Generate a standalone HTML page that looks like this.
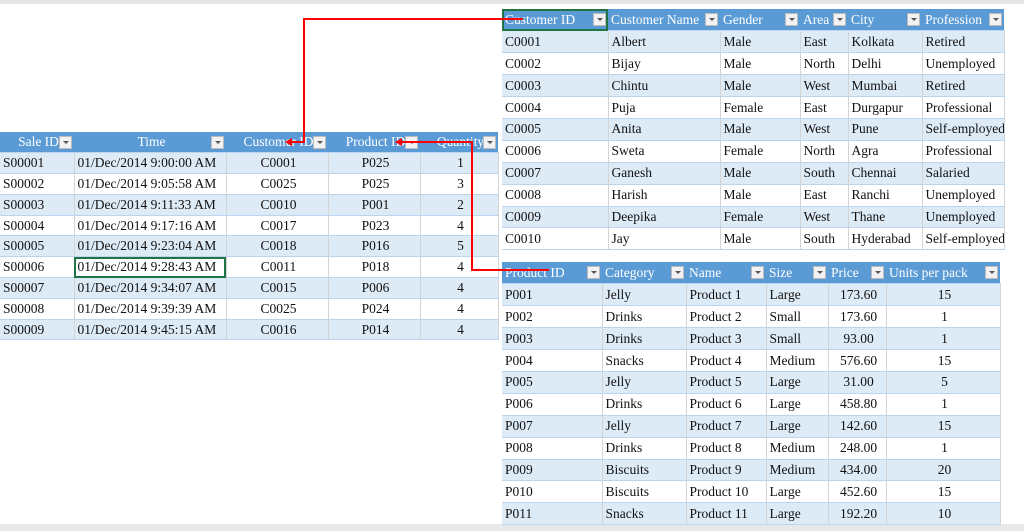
<!DOCTYPE html><html><head><style>
body{margin:0;width:1024px;height:531px;background:#fff;position:relative;overflow:hidden;font-family:"Liberation Serif",serif;font-size:13.5px;color:#111}
.t{position:absolute;border-collapse:collapse;table-layout:fixed}
.t td{padding:0 0 0 3px;white-space:nowrap;overflow:hidden;border-right:1px solid #d4d4d4;line-height:18px;box-sizing:border-box}
.t tr:nth-child(even) td{background:#ddebf7;border-bottom:1px solid #bcd5ee}
.t tr:nth-child(odd) td{background:#fff;border-bottom:1px solid #bcd5ee}
.t tr.h td{background:#5b9bd5;color:#fff;position:relative;border-right:none}
.a td{height:20.8px}
.b td{height:21.9px}
.dd{position:absolute;right:2px;top:4px;width:13px;height:13px;background:#f2f2f2;border:1px solid #bbb;box-sizing:border-box}
.dd:after{content:"";position:absolute;left:3px;top:4px;border-left:3px solid transparent;border-right:3px solid transparent;border-top:3px solid #555}
.c{text-align:center}
.r{position:absolute;background:#f00}
</style></head><body>
<div style="position:absolute;left:0;top:0;width:1024px;height:4px;background:#e6e6e6"></div>
<div style="position:absolute;left:0;top:524px;width:1024px;height:7px;background:#e8e8e8"></div>

<table class="t a" style="left:0;top:132px;width:498px">
<colgroup><col style="width:74px"><col style="width:152px"><col style="width:102px"><col style="width:92px"><col style="width:78px"></colgroup>
<tr class="h"><td class="c">Sale ID<span class="dd"></span></td><td class="c">Time<span class="dd"></span></td><td class="c">Customer ID<span class="dd"></span></td><td class="c">Product ID<span class="dd"></span></td><td class="c">Quantity<span class="dd"></span></td></tr>
<tr><td>S00001</td><td>01/Dec/2014 9:00:00 AM</td><td class="c">C0001</td><td class="c">P025</td><td class="c">1</td></tr>
<tr><td>S00002</td><td>01/Dec/2014 9:05:58 AM</td><td class="c">C0025</td><td class="c">P025</td><td class="c">3</td></tr>
<tr><td>S00003</td><td>01/Dec/2014 9:11:33 AM</td><td class="c">C0010</td><td class="c">P001</td><td class="c">2</td></tr>
<tr><td>S00004</td><td>01/Dec/2014 9:17:16 AM</td><td class="c">C0017</td><td class="c">P023</td><td class="c">4</td></tr>
<tr><td>S00005</td><td>01/Dec/2014 9:23:04 AM</td><td class="c">C0018</td><td class="c">P016</td><td class="c">5</td></tr>
<tr><td>S00006</td><td style="outline:2px solid #217346;outline-offset:-2px">01/Dec/2014 9:28:43 AM</td><td class="c">C0011</td><td class="c">P018</td><td class="c">4</td></tr>
<tr><td>S00007</td><td>01/Dec/2014 9:34:07 AM</td><td class="c">C0015</td><td class="c">P006</td><td class="c">4</td></tr>
<tr><td>S00008</td><td>01/Dec/2014 9:39:39 AM</td><td class="c">C0025</td><td class="c">P024</td><td class="c">4</td></tr>
<tr><td>S00009</td><td>01/Dec/2014 9:45:15 AM</td><td class="c">C0016</td><td class="c">P014</td><td class="c">4</td></tr>
</table>

<table class="t b" style="left:502px;top:9px;width:502px">
<colgroup><col style="width:106px"><col style="width:112px"><col style="width:80px"><col style="width:48px"><col style="width:74px"><col style="width:82px"></colgroup>
<tr class="h"><td style="outline:2px solid #217346;outline-offset:-2px">Customer ID<span class="dd"></span></td><td>Customer Name<span class="dd"></span></td><td>Gender<span class="dd"></span></td><td>Area<span class="dd"></span></td><td>City<span class="dd"></span></td><td>Profession<span class="dd"></span></td></tr>
<tr><td>C0001</td><td>Albert</td><td>Male</td><td>East</td><td>Kolkata</td><td>Retired</td></tr>
<tr><td>C0002</td><td>Bijay</td><td>Male</td><td>North</td><td>Delhi</td><td>Unemployed</td></tr>
<tr><td>C0003</td><td>Chintu</td><td>Male</td><td>West</td><td>Mumbai</td><td>Retired</td></tr>
<tr><td>C0004</td><td>Puja</td><td>Female</td><td>East</td><td>Durgapur</td><td>Professional</td></tr>
<tr><td>C0005</td><td>Anita</td><td>Male</td><td>West</td><td>Pune</td><td>Self-employed</td></tr>
<tr><td>C0006</td><td>Sweta</td><td>Female</td><td>North</td><td>Agra</td><td>Professional</td></tr>
<tr><td>C0007</td><td>Ganesh</td><td>Male</td><td>South</td><td>Chennai</td><td>Salaried</td></tr>
<tr><td>C0008</td><td>Harish</td><td>Male</td><td>East</td><td>Ranchi</td><td>Unemployed</td></tr>
<tr><td>C0009</td><td>Deepika</td><td>Female</td><td>West</td><td>Thane</td><td>Unemployed</td></tr>
<tr><td>C0010</td><td>Jay</td><td>Male</td><td>South</td><td>Hyderabad</td><td>Self-employed</td></tr>
</table>

<table class="t b" style="left:502px;top:262px;width:498px">
<colgroup><col style="width:100px"><col style="width:84px"><col style="width:80px"><col style="width:62px"><col style="width:58px"><col style="width:114px"></colgroup>
<tr class="h"><td>Product ID<span class="dd"></span></td><td>Category<span class="dd"></span></td><td>Name<span class="dd"></span></td><td>Size<span class="dd"></span></td><td>Price<span class="dd"></span></td><td>Units per pack<span class="dd"></span></td></tr>
<tr><td>P001</td><td>Jelly</td><td>Product 1</td><td>Large</td><td class="c">173.60</td><td class="c">15</td></tr>
<tr><td>P002</td><td>Drinks</td><td>Product 2</td><td>Small</td><td class="c">173.60</td><td class="c">1</td></tr>
<tr><td>P003</td><td>Drinks</td><td>Product 3</td><td>Small</td><td class="c">93.00</td><td class="c">1</td></tr>
<tr><td>P004</td><td>Snacks</td><td>Product 4</td><td>Medium</td><td class="c">576.60</td><td class="c">15</td></tr>
<tr><td>P005</td><td>Jelly</td><td>Product 5</td><td>Large</td><td class="c">31.00</td><td class="c">5</td></tr>
<tr><td>P006</td><td>Drinks</td><td>Product 6</td><td>Large</td><td class="c">458.80</td><td class="c">1</td></tr>
<tr><td>P007</td><td>Jelly</td><td>Product 7</td><td>Large</td><td class="c">142.60</td><td class="c">15</td></tr>
<tr><td>P008</td><td>Drinks</td><td>Product 8</td><td>Medium</td><td class="c">248.00</td><td class="c">1</td></tr>
<tr><td>P009</td><td>Biscuits</td><td>Product 9</td><td>Medium</td><td class="c">434.00</td><td class="c">20</td></tr>
<tr><td>P010</td><td>Biscuits</td><td>Product 10</td><td>Large</td><td class="c">452.60</td><td class="c">15</td></tr>
<tr><td>P011</td><td>Snacks</td><td>Product 11</td><td>Large</td><td class="c">192.20</td><td class="c">10</td></tr>
</table>

<div class="r" style="left:303px;top:18px;width:220px;height:2px"></div>
<div class="r" style="left:303px;top:18px;width:2px;height:125px"></div>
<div class="r" style="left:290px;top:141px;width:15px;height:2px"></div>
<div style="position:absolute;left:285px;top:138px;border-right:7px solid #f00;border-top:4px solid transparent;border-bottom:4px solid transparent"></div>
<div class="r" style="left:471px;top:141px;width:2px;height:130px"></div>
<div class="r" style="left:471px;top:269px;width:78px;height:2px"></div>
<div class="r" style="left:400px;top:141px;width:72px;height:2px"></div>
<div style="position:absolute;left:395px;top:138px;border-right:7px solid #f00;border-top:4px solid transparent;border-bottom:4px solid transparent"></div>
</body></html>
